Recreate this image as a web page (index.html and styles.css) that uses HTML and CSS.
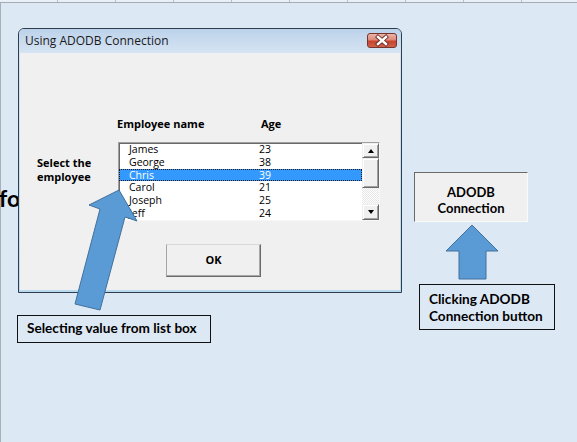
FILE: index.html
```html
<!DOCTYPE html>
<html>
<head>
<meta charset="utf-8">
<title>Using ADODB Connection</title>
<link rel="stylesheet" href="styles.css">
</head>
<body>
<div class="screen">
  <div class="ruler"></div>
  <div class="cell-text">fo</div>

  <div class="dialog">
    <div class="titlebar">
      <span class="title">Using ADODB Connection</span>
      <span class="close">
        <svg width="30" height="15" viewBox="0 0 30 15">
          <path d="M11 4 L19 11 M19 4 L11 11" stroke="#6b2b22" stroke-width="4.2" stroke-linecap="square" fill="none"/>
          <path d="M11 4 L19 11 M19 4 L11 11" stroke="#ffffff" stroke-width="2.4" stroke-linecap="square" fill="none"/>
        </svg>
      </span>
    </div>
    <div class="client">
      <div class="headers">
        <span class="h-name">Employee name</span>
        <span class="h-age">Age</span>
      </div>
      <div class="main">
        <div class="prompt">Select the<br>employee</div>
        <div class="listbox">
          <div class="items">
            <div class="item"><span class="c-name">James</span><span>23</span></div>
            <div class="item"><span class="c-name">George</span><span>38</span></div>
            <div class="item selected"><span class="c-name">Chris</span><span>39</span></div>
            <div class="item"><span class="c-name">Carol</span><span>21</span></div>
            <div class="item"><span class="c-name">Joseph</span><span>25</span></div>
            <div class="item"><span class="c-name">Jeff</span><span>24</span></div>
          </div>
          <div class="scrollbar">
            <div class="sb-btn"><span class="tri-up"></span></div>
            <div class="sb-thumb"></div>
            <div class="sb-track"></div>
            <div class="sb-btn sb-down"><span class="tri-down"></span></div>
          </div>
        </div>
      </div>
      <div class="actions">
        <div class="ok">OK</div>
      </div>
    </div>
  </div>

  <div class="sheet-button">ADODB<br>Connection</div>
  <div class="note note-right">Clicking ADODB<br>Connection button</div>
  <div class="note note-left">Selecting value from list box</div>

  <svg class="arrows" width="577" height="442" viewBox="0 0 577 442">
    <polygon points="119,190 137,221 125,217 100,310 75,304 100,209 89,205" fill="#5b9bd5" stroke="#41719c" stroke-width="1"/>
    <polygon points="472,225 498,251 486,251 486,279 459,279 459,251 446,251" fill="#5b9bd5" stroke="#41719c" stroke-width="1"/>
  </svg>
</div>
</body>
</html>
```

FILE: styles.css
```css
html, body {
  margin: 0;
  padding: 0;
}
body {
  width: 577px;
  height: 442px;
  overflow: hidden;
  background: #dce8f4;
}
.screen {
  position: relative;
  width: 577px;
  height: 442px;
  overflow: hidden;
  background: linear-gradient(to right, #a9afb6 0, #a9afb6 1px, transparent 1px), #dce8f4;
}
.ruler {
  height: 2px;
  background-color: #eaf0f7;
  background-image: repeating-linear-gradient(to right, transparent 0, transparent 57px, #b9bfc7 57px, #b9bfc7 58px);
  border-bottom: 1px solid #a6abb2;
}
.cell-text {
  position: absolute;
  left: -1px;
  top: 185px;
  font: 700 23px/26px Lato, "Liberation Sans", sans-serif;
  color: #000;
}

/* dialog window */
.dialog {
  position: absolute;
  left: 18px;
  top: 28px;
  width: 384px;
  height: 265px;
  box-sizing: border-box;
  border: 1px solid #2f3e4f;
  border-radius: 6px 6px 0 0;
  background: linear-gradient(#c2d6ec 0, #d3e2f2 20px, #b9daef 100%);
  display: flex;
  flex-direction: column;
}
.titlebar {
  height: 24px;
  display: flex;
  align-items: center;
  justify-content: space-between;
  padding: 0 4px 0 6px;
  border-radius: 5px 5px 0 0;
  background: linear-gradient(#bcd2ea, #d6e4f3);
}
.title {
  font: 400 12px/16px "Open Sans", "DejaVu Sans", sans-serif;
  color: #1a1a1a;
}
.close {
  align-self: flex-start;
  margin-top: 4px;
  width: 30px;
  height: 15px;
  box-sizing: border-box;
  border: 1px solid #76342a;
  border-radius: 3px;
  background: linear-gradient(#ebb4a9 0, #dc8a79 45%, #c6432e 55%, #d0614c 100%);
  display: flex;
  align-items: center;
  justify-content: center;
  overflow: hidden;
}
.close svg {
  display: block;
  margin: -1px;
}
.client {
  height: 237px;
  margin: 0 1px;
  background: #f0f0f0;
  padding: 64px 0 0 17px;
  box-sizing: border-box;
  font-family: "Open Sans", "DejaVu Sans", sans-serif;
  color: #000;
}
.headers {
  display: flex;
  padding-left: 80px;
  font-size: 11px;
  line-height: 14px;
  font-weight: 700;
}
.h-name {
  width: 144px;
}
.main {
  display: flex;
  margin-top: 11px;
}
.prompt {
  width: 81px;
  padding-top: 14px;
  font-size: 11px;
  line-height: 14px;
  font-weight: 700;
}
.listbox {
  width: 262px;
  height: 79px;
  box-sizing: border-box;
  border: 1px solid;
  border-color: #a0a0a0 #f7f7f7 #f7f7f7 #a0a0a0;
  box-shadow: inset 1px 1px 0 #6a6a6a;
  background: #fff;
  display: flex;
  overflow: hidden;
}
.items {
  flex: 1;
  overflow: hidden;
  font-size: 10.5px;
  line-height: 12.8px;
}
.item {
  display: flex;
  height: 12.8px;
  padding-left: 10px;
  box-sizing: border-box;
}
.c-name {
  width: 130px;
}
.item.selected {
  background: #3399ff;
  color: #fff;
  outline: 1px dotted #1a1a1a;
  outline-offset: -1px;
}
.scrollbar {
  width: 17px;
  display: flex;
  flex-direction: column;
}
.sb-btn, .sb-thumb {
  box-sizing: border-box;
  background: #f0f0f0;
  border: 1px solid;
  border-color: #f0f0f0 #6a6a6a #6a6a6a #f0f0f0;
  box-shadow: inset 1px 1px 0 #fff, inset -1px -1px 0 #a0a0a0;
  display: flex;
  align-items: center;
  justify-content: center;
}
.sb-btn {
  height: 15px;
}
.sb-down {
  height: 16px;
}
.sb-thumb {
  height: 30px;
}
.sb-track {
  height: 16px;
  background: repeating-conic-gradient(#ffffff 0 25%, #e6e6e6 0 50%) 0 0 / 2px 2px;
}
.tri-up, .tri-down {
  width: 0;
  height: 0;
  border-left: 3.5px solid transparent;
  border-right: 3.5px solid transparent;
}
.tri-up {
  border-bottom: 4px solid #000;
}
.tri-down {
  border-top: 4px solid #000;
}
.actions {
  margin-top: 23px;
  padding-left: 129px;
}
.ok {
  width: 95px;
  height: 33px;
  box-sizing: border-box;
  border: 1px solid;
  border-color: #d9d9d9 #6a6a6a #6a6a6a #a5a5a5;
  box-shadow: inset -1px -1px 0 #a8a8a8;
  background: #f0f0f0;
  font-size: 11px;
  font-weight: 700;
  line-height: 30px;
  text-align: center;
}

/* worksheet shapes */
.sheet-button {
  position: absolute;
  left: 414px;
  top: 172px;
  width: 114px;
  height: 50px;
  box-sizing: border-box;
  border: 1px solid;
  border-color: #6b6b6b #fafafa #fafafa #6b6b6b;
  background: #f0f0f0;
  padding-top: 11px;
  font: 700 13px/16px Lato, "Liberation Sans", sans-serif;
  text-align: center;
  color: #000;
}
.note {
  position: absolute;
  box-sizing: border-box;
  border: 1px solid #111;
  background: #dce8f4;
  font: 700 13.6px/17px Lato, "Liberation Sans", sans-serif;
  color: #000;
  padding-left: 9px;
}
.note-right {
  left: 419px;
  top: 284px;
  width: 136px;
  height: 46px;
  padding-top: 6px;
}
.note-left {
  left: 17px;
  top: 315px;
  width: 194px;
  height: 28px;
  padding-top: 4px;
}
.arrows {
  position: absolute;
  left: 0;
  top: 0;
  pointer-events: none;
}
```
